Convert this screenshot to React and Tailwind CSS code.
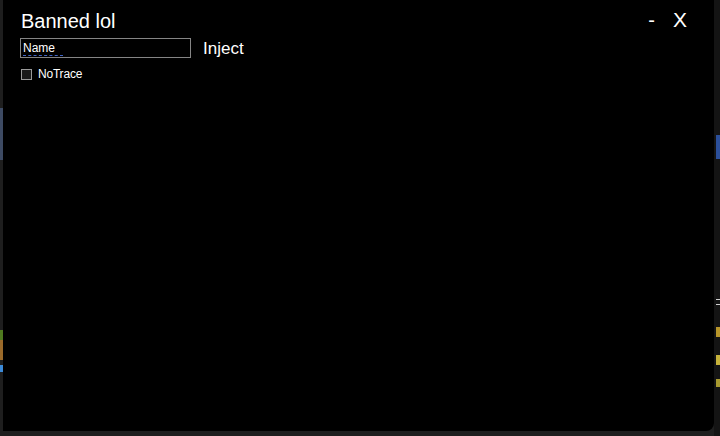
import React from "react";

const App = () => {
  return (
    <div
      className="w-[720px] h-[436px] bg-[#1e1e1e] flex overflow-hidden"
      style={{ fontFamily: '"Liberation Sans", Arial, sans-serif' }}
    >
      {/* left strip of the window behind */}
      <div className="w-[3px] h-full flex flex-col">
        <div className="h-[108px]" />
        <div className="h-[52px] bg-[#3d4a63]" />
        <div className="h-[170px]" />
        <div className="h-[10px] bg-[#4f7a1f]" />
        <div className="h-[20px] bg-[#9a6a2a]" />
        <div className="h-[5px]" />
        <div className="h-[7px] bg-[#3c8ad8]" />
      </div>

      <div className="w-[711px] h-[431px] bg-black rounded-br-lg flex flex-col">
        <div className="flex items-start justify-between">
          <div className="pl-[18px] pt-[9px] text-white text-[20px] leading-[24px]">Banned lol</div>
          <div className="flex items-start text-white pt-[8px] pr-[27px]">
            <span className="text-[20px] leading-[24px] mr-[18px]">-</span>
            <span className="text-[21px] leading-[24px]">X</span>
          </div>
        </div>

        <div className="flex items-center pl-[17px] pt-[5px]">
          <div className="w-[171px] h-[20px] border border-[#858585] flex flex-col justify-center pl-[2px]">
            <span className="text-white text-[12px] leading-[13px] pt-[1px]">Name</span>
            <div className="w-[40px] border-b border-dashed border-[#3f64c8]" />
          </div>
          <span className="text-white text-[17px] ml-[12px] leading-none">Inject</span>
        </div>

        <div className="flex items-center pl-[18px] pt-[10px]">
          <div className="w-[11px] h-[11px] border border-[#9a9a9a] bg-[#1a1a1a]" />
          <span className="text-white text-[12px] ml-[6px] leading-none tracking-[-0.2px]">NoTrace</span>
        </div>
      </div>

      {/* right strip of the window behind */}
      <div className="flex-1 h-full flex flex-col bg-[#141414]">
        <div className="h-[135px]" />
        <div className="h-[24px] ml-[2px] bg-[#2b4f9a]" />
        <div className="h-[140px]" />
        <div className="h-[6px] ml-[2px] border-y border-[#cfcfcf]" />
        <div className="h-[22px]" />
        <div className="h-[10px] ml-[2px] bg-[#b8962a]" />
        <div className="h-[18px]" />
        <div className="h-[10px] ml-[2px] bg-[#c6b23a]" />
        <div className="h-[14px]" />
        <div className="h-[8px] ml-[2px] bg-[#a89a30]" />
      </div>
    </div>
  );
};

export default App;
